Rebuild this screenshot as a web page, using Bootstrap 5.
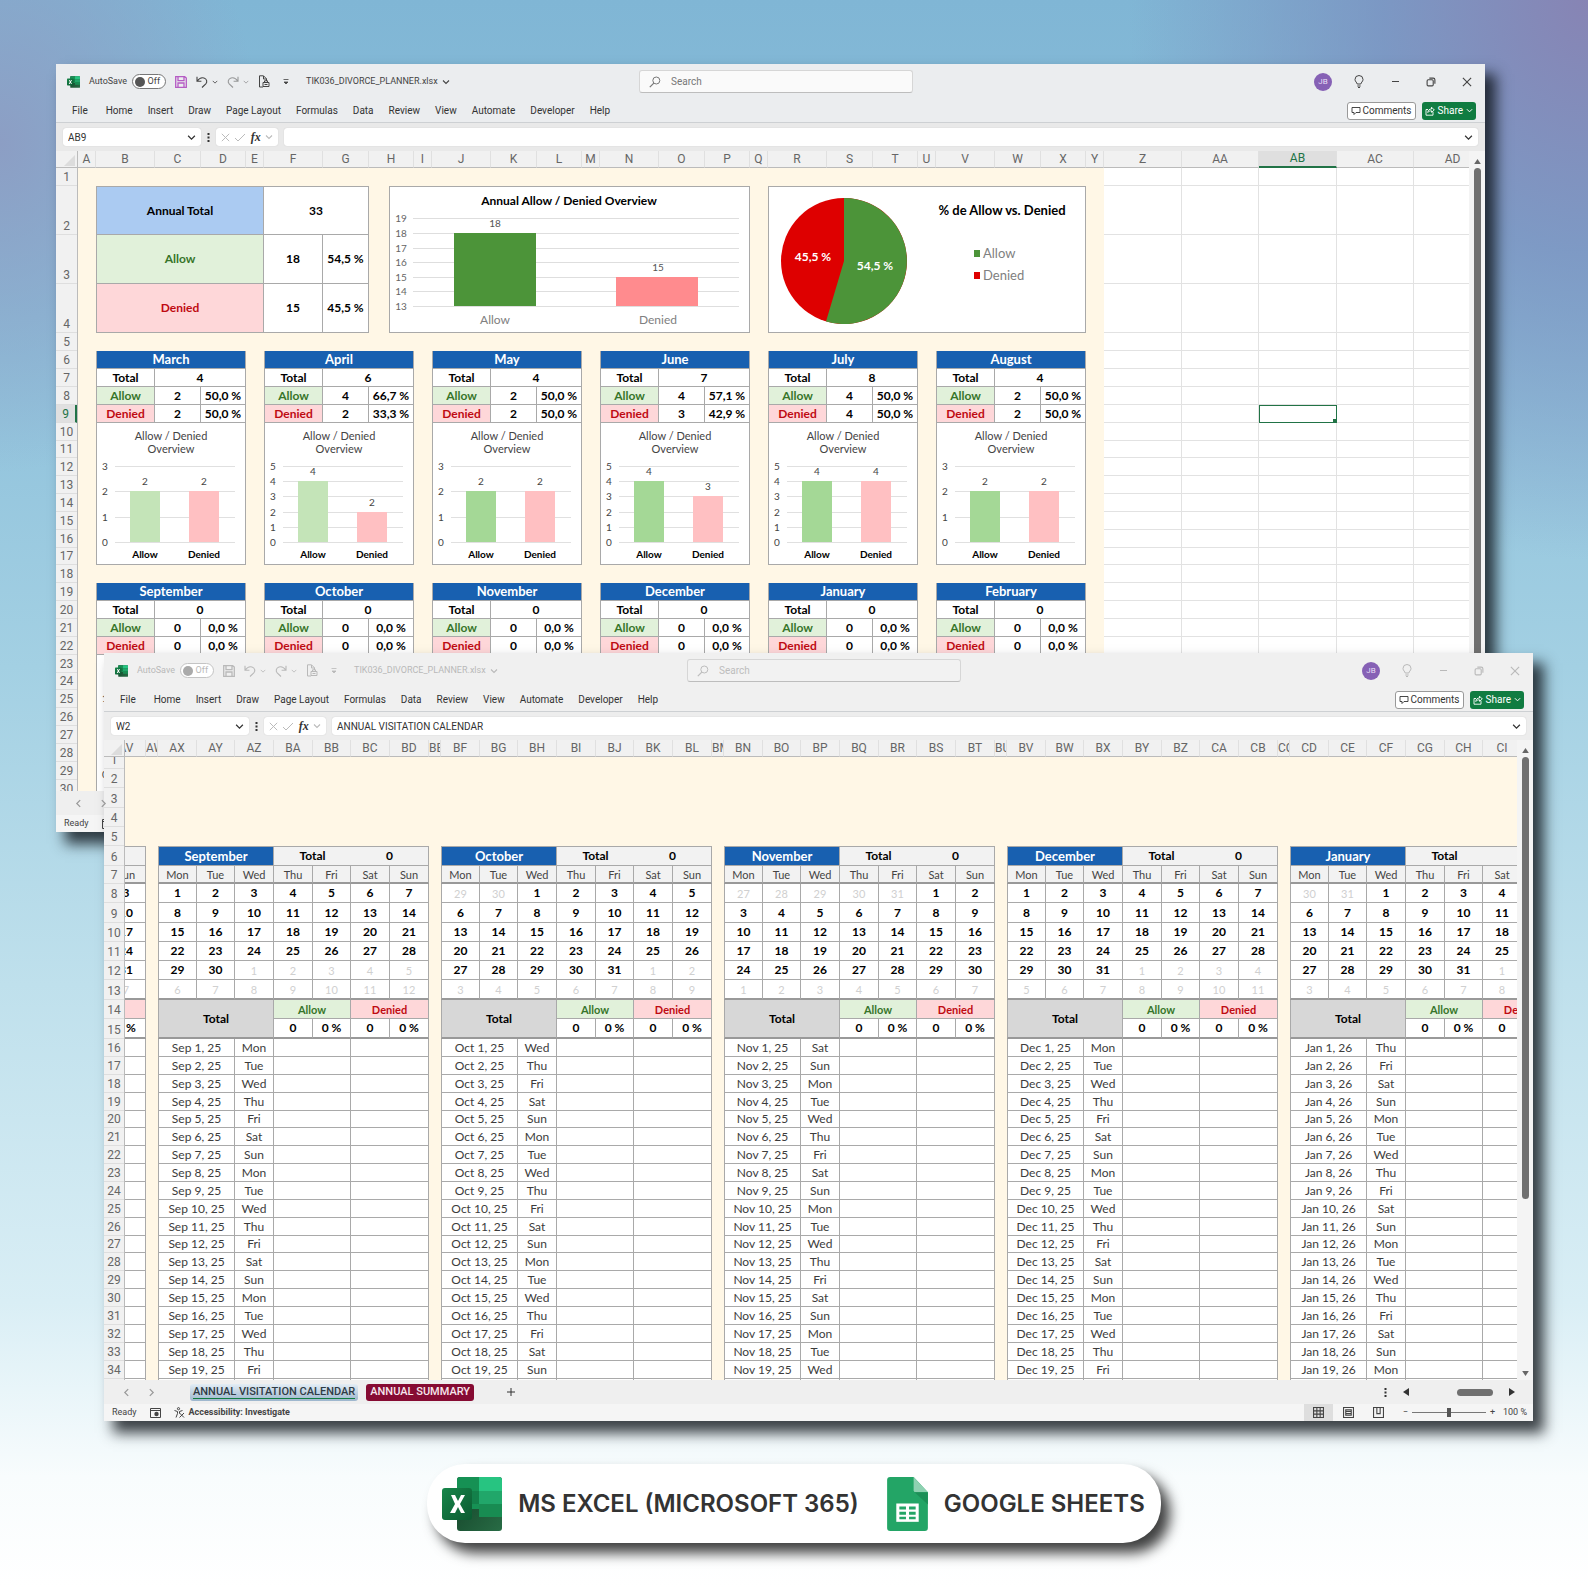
<!DOCTYPE html>
<html lang="en">
<head>
<meta charset="utf-8">
<meta name="viewport" content="width=device-width, initial-scale=1">
<title>Divorce Planner – Excel and Google Sheets</title>
<link rel="stylesheet" href="https://cdn.jsdelivr.net/npm/bootstrap@5.3.0/dist/css/bootstrap.min.css">
<style>
:root{--ui:Roboto,"Open Sans",sans-serif;--doc:Lato,"Open Sans",sans-serif;--line:#a9a9a9;--cream:#fff7e6;--blue:#1860b0}
body{font-family:var(--ui);font-size:10px;color:#333;min-height:100vh;
background:
radial-gradient(ellipse 460px 560px at 100% 0,#8784b4 0,rgba(122,142,190,.75) 45%,rgba(130,160,200,0) 100%),
radial-gradient(ellipse 260px 330px at 0 9%,#8c9ec4 0,rgba(141,160,196,0) 100%),
linear-gradient(180deg,#80b6d5 0,#8cbfda 20%,#a3d0e3 42%,#bfe0ec 62%,#d9eef5 82%,#f8fcfd 93%,#fff 100%)}
.desk{display:grid;padding:64px 55px 0 56px}
.win{grid-area:1/1;align-self:start;box-shadow:10px 11px 13px 1px rgba(10,15,20,.78);background:#ebedef;min-width:0}
.win-a{margin-right:48px}
.win-b{margin:589px 0 0 48px;background:#f0f0f0}
.win button{border:0;background:none;padding:0;color:inherit;line-height:1}
.win svg{display:block;flex:none}
.titlebar{display:grid;grid-template-columns:1fr 274px 1fr;height:35px;padding-left:11px;align-items:center;color:#444;font-size:9px}
.win-b .titlebar{color:#b9b9b9}
.tl{gap:9px}
.autolabel{gap:5px;line-height:15px}
.switchbox{border:1px solid #777;border-radius:8px;width:34px;height:15px;padding:0 5px 0 2px;background:#fff}
.win-b .switchbox{border-color:#c4c4c4}
.switchbox input{appearance:none;width:10px;height:10px;border-radius:50%;background:#555;margin:0}
.win-b .switchbox input{background:#aaa}
.fname{margin-left:8px}
.searchbox{height:23px;background:#fafafa;border:1px solid #d6d6d6;border-bottom-color:#bdbdbd;border-radius:3px;padding:0 9px;gap:10px;color:#777}
.win-b .searchbox{background:#f2f2f2;color:#bdbdbd}
.searchbox input,.fbar input{border:0;background:none;outline:0;font-size:10px;color:#333;min-width:0;padding:0}
.searchbox input::placeholder{color:inherit;opacity:1}
.searchbox input{color:inherit}
.slot{width:36px;display:flex;justify-content:center}
.avatar{width:18px;height:18px;border-radius:50%;background:#8661b5;color:#e9dff5;font-size:8px}
.menubar{height:24px;border-bottom:1px solid #cdd0d3;padding:0 9px 0 16px;gap:15px}
.menubar a{color:#333;text-decoration:none;line-height:25px}
.menubar a:first-child{margin-right:3px}
.review-tools{gap:6px}
.win .comments{height:18px;border:1px solid #999;border-radius:3px;background:#fff;padding:0 3px;gap:2px}
.win .share{height:18px;border-radius:3px;background:#107c41;color:#fff;padding:0 3px;gap:3px}
.fbar{padding:5px 7px;height:28px;gap:6px;background:#e9e9e9}
.win-b .fbar{background:#ededed}
.fld{height:18px;background:#fff;border-radius:3px;padding:0 5px;box-shadow:0 0 1px #bbb}
.namebox{width:138px}
.fxbox{width:62px;justify-content:space-between}
.fxbox span{color:#bbb}
.fxbox i{font:italic bold 12px "Liberation Serif",serif}
.sheet{display:flex;overflow:hidden;background:#f1f1f1;height:640px}
.rowheads{flex:none;background:#f1f1f1;color:#666;font-size:12px;border-right:1px solid #bbb;text-align:center}
.win-a .rowheads{width:22px}.win-b .rowheads{width:21px}
.rowheads div{display:flex;align-items:flex-end;justify-content:center;line-height:15px;border-bottom:1px solid #dedede;overflow:hidden}
.rowheads .corner{height:17px;border-color:#bbb}
.rowheads .sel{background:#e0e0e0;color:#217346;border-right:2px solid #217346}
.pane{flex:1;min-width:0;overflow:hidden}
.win-b .pane table{margin-left:-18px}
.grid-t{table-layout:fixed;border-collapse:separate;border-spacing:0;font-family:var(--doc);font-size:12px;text-align:center;color:#000}
.grid-t td,.grid-t th{padding:0;line-height:1;overflow:hidden;white-space:nowrap;vertical-align:middle}
.grid-t thead th{height:17px;font:12px var(--ui);line-height:16px;color:#666;background:#f1f1f1;border-bottom:1px solid #bbb;border-right:1px solid #e0e0e0}
.grid-t thead th.sel{background:#dfdfdf;color:#217346;border-bottom:2px solid #217346;line-height:15px}
.cream{background:var(--cream)}
.plain{background:#fff;border-right:1px solid #e2e2e2;border-bottom:1px solid #e2e2e2}
.picked{background:linear-gradient(#217346,#217346) right bottom/3px 3px no-repeat #fff;border:1px solid #217346}
.c{background:#fff;border-right:1px solid var(--line);border-bottom:1px solid var(--line)}
.l{border-left:1px solid var(--line)}
.t{border-top:1px solid var(--line)}
.b{font-weight:700}
.mo{background:var(--blue);color:#fff;font-weight:700;font-size:13px}
.al{background:#e1f1da;color:#37752a;font-weight:700}
.de{background:#fed7d9;color:#bf0a12;font-weight:700}
.an{background:#abcbf2;font-weight:700}
.hd{background:#f2f2f2}
.nb{border-right:0}
.wk{font-size:11px;color:#444}
.dim{color:#d0d0d0;font-weight:400}
.sm{font-size:11px}
.tot{background:#d7d7d7;font-weight:700}
.thick{border-bottom:2px solid #999}
.dt{color:#3c3c3c}
.grid-t .boxed{padding-left:20px}
.frame{border:1px solid var(--line);background:#fff}
.grid-t svg text{font-family:var(--doc)}
.vbar{width:16px;flex:none;background:#f4f4f4;color:#666}
.vbar span{width:7px;border-radius:4px;background:#707070}
.win-a .vbar span{height:540px}.win-b .vbar span{height:442px}
.tabs{height:24px;background:#efefef;padding:0 18px 0 18px}
.win .tabs .nav-arrow{color:#999}
.tabs a{font-size:11px;line-height:16px;height:17px;text-decoration:none;padding:0 3px;border-radius:3px;font-weight:500}
.tabs .tab-on{background:linear-gradient(#e3edf5,#9db6cd);color:#2f3b45;margin-left:34px}
.tab-on span{border-bottom:1px solid #107c41;display:block;height:15px}
.tabs .tab-red{background:#860b33;color:#f6e6ec;margin-left:8px;padding:0 4px}
.status{height:17px;background:#f5f5f5;padding:0 6px 0 8px;font-size:9px;color:#444}
.st-l{gap:13px}
.st-r{gap:19px}
.st-on{background:#dedede;padding:3px 9px;margin-right:-9px}
.hthumb{width:36px;height:7px;border-radius:4px;background:#707070}
.status input[type=range]{appearance:none;width:74px;height:10px;margin:0;background:linear-gradient(#777,#777) center/100% 1px no-repeat}
.status input[type=range]::-webkit-slider-thumb{appearance:none;width:4px;height:9px;background:#555}
.pill{height:79px;border-radius:38px;background:#fff;box-shadow:9px 10px 13px rgba(0,0,0,.75);padding:0 16px 0 15px;margin:43px 0 45px;font:600 24px Inter,"Open Sans",sans-serif;color:#333}
.pill-gap{margin-left:28px}
</style>
</head>
<body>
<svg width="0" height="0" class="position-absolute" aria-hidden="true">
<defs>
<linearGradient id="gx" x1="0" y1="0" x2="1" y2="1"><stop offset="0" stop-color="#17864a"/><stop offset="1" stop-color="#0b5a31"/></linearGradient>
<linearGradient id="gd" x1="0" y1="0" x2="1" y2="1"><stop offset="0" stop-color="#123f26"/><stop offset="1" stop-color="#286c45"/></linearGradient>
<symbol id="xl" viewBox="0 0 60 54">
<rect x="15" width="45" height="54" rx="3" fill="url(#gd)"/><path d="M15 27V3a3 3 0 0 1 3-3h19v32H15z" fill="#169154"/><path d="M37 0h20a3 3 0 0 1 3 3v11H37z" fill="#27c481"/><path d="M37 14h23v13H37z" fill="#21a76a"/><path d="M37 27h23v13H37z" fill="#188c52"/><path d="M15 14h22v13H15z" fill="#13804a"/>
<rect y="11" width="30" height="32" rx="3" fill="url(#gx)"/><path d="M9 18h4l3 6 3-6h4l-5 9 5 9h-4l-3-6-3 6H8l5-9z" fill="#fff"/></symbol>
<symbol id="gs" viewBox="0 0 40 53"><path d="M3 0h23l14 15v35a3 3 0 0 1-3 3H3a3 3 0 0 1-3-3V3a3 3 0 0 1 3-3z" fill="#23a566"/><path d="M26 0l14 15H28a2 2 0 0 1-2-2z" fill="#8ed1b1"/><path d="M27 15h13v12z" fill="#1c8f57"/><path d="M9 26h22v18H9z" fill="#fff"/><path d="M12 29h6.500v3H12zM21.500 29H28v3h-6.500zM12 34h6.500v3H12zM21.500 34H28v3h-6.500zM12 39h6.500v2.500H12zM21.500 39H28v2.500h-6.500z" fill="#23a566"/></symbol>
<symbol id="save" viewBox="0 0 12 12"><path d="M.7.7h9L11.300 2v9.300H.7zM3 .7v4h6v-4M3 11V7h6v4" fill="none" stroke="currentColor" stroke-width="1.300"/></symbol>
<symbol id="undo" viewBox="0 0 12 12"><path d="M1 .8v4.400h4.400M1.300 5C3 2.500 5.500 1.200 8 2c3 1 3.500 4 1.800 5.800L6 11.500" fill="none" stroke="currentColor" stroke-width="1.100"/></symbol>
<symbol id="chev" viewBox="0 0 8 8"><path d="M1 2.500l3 3 3-3" fill="none" stroke="currentColor" stroke-width="1.100"/></symbol>
<symbol id="doc" viewBox="0 0 12 13"><path d="M5 12H1.500V.8h4l3 3V6M5.500 1v3h3" fill="none" stroke="currentColor"/><path d="M5 7.500h6v4H5zM6.500 7.500V5.800h3v1.700M6.500 9.500h3" fill="none" stroke="currentColor"/></symbol>
<symbol id="cust" viewBox="0 0 6 8"><path d="M.5 1.500h5M1 4l2 2 2-2z" fill="currentColor" stroke="currentColor" stroke-width=".8"/></symbol>
<symbol id="mag" viewBox="0 0 12 12"><circle cx="7.300" cy="4.500" r="3.500" fill="none" stroke="currentColor"/><path d="M4.800 7.200L.8 11.200" stroke="currentColor" stroke-width="1.200"/></symbol>
<symbol id="bulb" viewBox="0 0 10 13"><path d="M3.200 9C3 7.500 1 6.500 1 4.500a4 4 0 0 1 8 0C9 6.500 7 7.500 6.800 9zM3.300 11h3.400M4 12.500h2" fill="none" stroke="currentColor"/></symbol>
<symbol id="rest" viewBox="0 0 9 9"><rect x="1" y="2.500" width="5.500" height="5.500" rx="1" fill="none" stroke="currentColor"/><path d="M3 1h3.500A1.500 1.500 0 0 1 8 2.500V6" fill="none" stroke="currentColor"/></symbol>
<symbol id="cross" viewBox="0 0 9 9"><path d="M.8.800l7.400 7.400M8.200.8L.8 8.200" stroke="currentColor"/></symbol>
<symbol id="chat" viewBox="0 0 10 10"><path d="M1 1.500h8v5H5l-2 2v-2H1z" fill="none" stroke="currentColor" stroke-width=".9"/></symbol>
<symbol id="shr" viewBox="0 0 10 10"><path d="M3 3.500H1v5.700h7V6M2.800 6.500C3 4 4.500 3 6.500 3V1.200L9.300 4 6.500 6.300V4.800C5 4.800 3.800 5.200 2.800 6.500z" fill="none" stroke="currentColor" stroke-width=".9"/></symbol>
<symbol id="check" viewBox="0 0 12 9"><path d="M1 5l3 3L11 1" fill="none" stroke="currentColor"/></symbol>
<symbol id="up" viewBox="0 0 8 6"><path d="M4 0l4 6H0z" fill="currentColor"/></symbol>
<symbol id="down" viewBox="0 0 8 6"><path d="M4 6L0 0h8z" fill="currentColor"/></symbol>
<symbol id="lt" viewBox="0 0 6 8"><path d="M0 4l6-4v8z" fill="currentColor"/></symbol>
<symbol id="rt" viewBox="0 0 6 8"><path d="M6 4L0 0v8z" fill="currentColor"/></symbol>
<symbol id="dots" viewBox="0 0 3 9"><path d="M.5 0h2v2h-2zM.5 3.500h2v2h-2zM.5 7h2v2h-2z" fill="currentColor"/></symbol>
<symbol id="rec" viewBox="0 0 11 10"><path d="M.5.5h10v9H.5zM.5 2.500h10" fill="none" stroke="currentColor"/><circle cx="6.500" cy="6" r="2.200" fill="currentColor"/></symbol>
<symbol id="acc" viewBox="0 0 11 11"><circle cx="4.500" cy="1.700" r="1.100" fill="none" stroke="currentColor"/><path d="M.5 3.500l3 1v2L2 10.500M8.500 3.500l-3 1v2M5.500 6l4.500 4.500M10 6l-4.500 4.500" fill="none" stroke="currentColor"/></symbol>
<symbol id="vg" viewBox="0 0 10 10"><path d="M.5.5h9v9h-9zM.5 3.500h9M.5 6.500h9M3.500.5v9M6.500.5v9" fill="none" stroke="currentColor"/></symbol>
<symbol id="vp" viewBox="0 0 10 10"><path d="M.5.5h9v9h-9zM2.500 2.500h5v5h-5zM3 4h4M3 6h4" fill="none" stroke="currentColor"/></symbol>
<symbol id="vb" viewBox="0 0 10 10"><path d="M.5.5h9v9h-9zM3.500.5V6H6.500V.5" fill="none" stroke="currentColor"/></symbol>
</defs></svg>

<main>
<div class="desk">
<section class="win win-a" id="summary" aria-label="Annual summary"></section>
<section class="win win-b" id="calendar" aria-label="Annual visitation calendar"></section>
</div>
<div class="d-flex justify-content-center">
<div class="pill d-flex align-items-center">
<svg width="60" height="54"><use href="#xl"/></svg><span class="ms-3">MS EXCEL (MICROSOFT 365)</span>
<svg width="41" height="54" class="pill-gap"><use href="#gs"/></svg><span class="ms-3">GOOGLE SHEETS</span>
</div>
</div>
</main>

<script src="https://cdn.jsdelivr.net/npm/bootstrap@5.3.0/dist/js/bootstrap.bundle.min.js"></script>
<script>
const ic=(id,w,h,extra='')=>`<svg width="${w}" height="${h}" ${extra}><use href="#${id}"/></svg>`;
const btn=(label,inner,cls='')=>`<button type="button" aria-label="${label}" class="${cls}">${inner}</button>`;

/* Application frame shared by both workbook windows */
function frame(o){
 const menus=['File','Home','Insert','Draw','Page Layout','Formulas','Data','Review','View','Automate','Developer','Help'];
 return `
<header>
<div class="titlebar">
 <div class="tl d-flex align-items-center">${ic('xl',13,12)}
  <label class="autolabel d-flex align-items-center">AutoSave
   <span class="switchbox d-flex align-items-center justify-content-between"><input type="checkbox" role="switch">Off</span></label>
  ${btn('Save',ic('save',12,12,o.active?'style="color:#b55bc4"':''))}
  <span class="d-flex align-items-center gap-1">${btn('Undo',ic('undo',12,12))}${ic('chev',6,6)}</span>
  <span class="d-flex align-items-center gap-1 ${o.active?'opacity-50':''}">${btn('Redo',ic('undo',12,12,'transform="scale(-1 1)"'))}${ic('chev',6,6)}</span>
  ${btn('Print preview',ic('doc',12,13))}${btn('Customize toolbar',ic('cust',6,8),'ms-1')}
  <span class="fname d-flex align-items-center gap-1">TIK036_DIVORCE_PLANNER.xlsx ${ic('chev',8,8)}</span>
 </div>
 <label class="searchbox d-flex align-items-center">${ic('mag',12,12)}<input type="search" placeholder="Search" aria-label="Search" class="flex-grow-1"></label>
 <div class="d-flex align-items-center justify-content-end">
  <span class="slot"><span class="avatar d-flex align-items-center justify-content-center">JB</span></span>
  ${btn('Tips',ic('bulb',12,13),'slot')}${btn('Minimize','<svg width="9" height="9"><path d="M1 4.500h7" stroke="currentColor"/></svg>','slot')}${btn('Restore',ic('rest',10,10),'slot')}${btn('Close',ic('cross',10,10),'slot')}
 </div>
</div>
<nav class="menubar d-flex align-items-center">${menus.map(m=>`<a href="#">${m}</a>`).join('')}
 <div class="review-tools d-flex ms-auto"><button type="button" class="comments d-flex align-items-center">${ic('chat',10,10)}Comments</button>
 <button type="button" class="share d-flex align-items-center">${ic('shr',10,10)}Share${ic('chev',7,7)}</button></div>
</nav>
<div class="fbar d-flex align-items-center">
 <label class="fld namebox d-flex align-items-center"><input value="${o.cell}" aria-label="Name box" class="flex-grow-1">${ic('chev',9,9)}</label>
 ${ic('dots',3,9)}
 <div class="fld fxbox d-flex align-items-center"><span>${ic('cross',9,9)}</span><span>${ic('check',12,9)}</span><i>fx</i><span>${ic('chev',8,8)}</span></div>
 <label class="fld flex-grow-1 d-flex align-items-center"><input value="${o.formula}" aria-label="Formula bar" class="flex-grow-1">${ic('chev',9,9)}</label>
</div>
</header>
<div class="sheet"><div class="rowheads">${o.rowHeads}</div><div class="pane">${o.table}</div>
 <div class="vbar d-flex flex-column align-items-center pt-2 pb-1">${ic('up',7,5)}<span class="mt-1"></span><div class="mt-auto">${ic('down',7,5)}</div></div></div>
<div class="tabs d-flex align-items-center">
 ${btn('Previous sheet',ic('chev',9,9,'transform="rotate(90)"'),'nav-arrow')}${btn('Next sheet',ic('chev',9,9,'transform="rotate(-90)"'),'nav-arrow ms-3')}
 <a href="#" class="tab-on"><span>ANNUAL VISITATION CALENDAR</span></a><a href="#" class="tab-red">ANNUAL SUMMARY</a>
 ${btn('New sheet','<svg width="10" height="10"><path d="M5 1v8M1 5h8" stroke="currentColor"/></svg>','ms-4 ps-2')}
 <div class="d-flex align-items-center ms-auto">${ic('dots',3,9,'class="me-3"')}${ic('lt',6,8)}<span class="hthumb ms-5"></span>${ic('rt',6,8,'class="ms-3"')}</div>
</div>
<footer class="status d-flex align-items-center justify-content-between">
 <div class="st-l d-flex align-items-center"><span>Ready</span>${ic('rec',11,10)}<span class="d-flex align-items-center gap-1">${ic('acc',11,11)}<b>Accessibility: Investigate</b></span></div>
 <div class="st-r d-flex align-items-center"><span class="st-on">${ic('vg',11,11)}</span>${ic('vp',11,11)}${ic('vb',11,11)}
 <span class="d-flex align-items-center gap-1"><span>−</span><input type="range" aria-label="Zoom" value="50"><span>+</span><span class="ms-1">100 %</span></span></div>
</footer>`;
}
function colName(n){let s='';n++;while(n){n--;s=String.fromCharCode(65+n%26)+s;n=Math.floor(n/26)}return s}
function makeTable(cols,first,rows,cells,base,selCol){
 const w=cols.reduce((a,b)=>a+b,0),taken={};
 let h=`<table class="grid-t" style="width:${w}px"><colgroup>${cols.map(c=>`<col style="width:${c}px">`).join('')}</colgroup><thead><tr>`;
 cols.forEach((c,i)=>h+=`<th class="${i===selCol?'sel':''}">${colName(first+i)}</th>`);
 h+='</tr></thead><tbody>';
 rows.forEach((rh,r)=>{
  h+=`<tr style="height:${rh}px">`;
  cols.forEach((_,c)=>{
   if(taken[r+','+c])return;
   const x=cells[r+','+c];
   if(!x){h+=`<td class="${base(r,c)}"></td>`;return}
   const rs=x.rs||1,cs=x.cs||1;
   for(let a=0;a<rs;a++)for(let b=0;b<cs;b++)taken[(r+a)+','+(c+b)]=1;
   h+=`<td class="${x.k}" ${rs>1?`rowspan="${rs}"`:''} ${cs>1?`colspan="${cs}"`:''}>${x.v}</td>`;
  });
  h+='</tr>';
 });
 return h+'</tbody></table>';
}
const heads=(rows,sel)=>'<div class="corner"><svg width="20" height="16"><path d="M18 4v11H7z" fill="#dcdcdc"/></svg></div>'+rows.map((r,i)=>`<div class="${i===sel?'sel':''}" style="height:${r}px">${i+1}</div>`).join('');
const T=(x,y,s,sz,extra='')=>`<text x="${x}" y="${y}" font-size="${sz}" text-anchor="middle" ${extra}>${s}</text>`;

/* Column chart under each month */
function monthChart(a,d,max,col){
 let s='<svg width="148" height="140" viewBox="0 0 148 140">';
 s+=T(74,16,'Allow / Denied',11,'fill="#444"')+T(74,29,'Overview',11,'fill="#444"');
 const y=v=>118-Math.round(v*76/max);
 for(let i=0;i<=max;i++)s+=`<path d="M18 ${y(i)+.5}H138" stroke="#e0e0e0"/>`+T(8,y(i)+4,i,10,'fill="#444"');
 s+=`<path fill="${col}" d="M33 ${y(a)}h30V118H33z"/><path fill="#ffc0c2" d="M92 ${y(d)}h30V118H92z"/>`;
 s+=T(48,y(a)-6,a,10,'fill="#444"')+T(107,y(d)-6,d,10,'fill="#444"');
 return s+T(48,134,'Allow',10,'font-weight="700"')+T(107,134,'Denied',10,'font-weight="700"')+'</svg>';
}
function annualBars(){
 let s='<svg width="100%" height="145" viewBox="0 0 359 145">'+T(179,18,'Annual Allow / Denied Overview',12,'font-weight="700"');
 const y=v=>Math.round(119-(v-13)*14.6);
 for(let v=13;v<=19;v++)s+=`<path d="M23 ${y(v)+.5}H349" stroke="#dedede"/>`+T(11,y(v)+4,v,10,'fill="#666"');
 s+=`<path fill="#4c9439" d="M64 ${y(18)}h82V119H64z"/><path fill="#ff8b8e" d="M226 ${y(15)}h82V119H226z"/>`;
 return s+T(105,40,18,10,'fill="#555"')+T(268,84,15,10,'fill="#555"')+T(105,137,'Allow',12,'fill="#808080"')+T(268,137,'Denied',12,'fill="#808080"')+'</svg>';
}
function annualPie(){
 return '<svg width="100%" height="145" viewBox="0 0 316 145"><circle cx="75" cy="74" r="63" fill="#de0000"/><path d="M75 74V11A63 63 0 1 1 57 134.400z" fill="#4c9439"/>'
 +T(44,74,'45,5 %',12,'fill="#fff" font-weight="700"')+T(106,83,'54,5 %',12,'fill="#fff" font-weight="700"')
 +T(233,28,'% de Allow vs. Denied',13,'font-weight="700"')
 +'<path d="M205 63h6v7h-6z" fill="#4c9439"/><path d="M205 85h6v7h-6z" fill="#de0000"/><text x="214" y="71" font-size="13" fill="#808080">Allow</text><text x="214" y="93" font-size="13" fill="#808080">Denied</text></svg>';
}

/* Annual summary sheet */
(function(){
 const cols=[18];for(let i=0;i<6;i++)cols.push(59,46,45,18);
 cols.push(78,77,78,77,78);
 const rows=[18,49,49,49,18];
 for(let r=6;r<=31;r++)rows.push([11,17,24].includes(r)?17:18);
 const C={},put=(r,c,k,v,cs,rs)=>C[(r-1)+','+c]={k,v,cs,rs};
 put(2,1,'c l t an','Annual Total',4);put(2,5,'c t b','33',2);
 put(3,1,'c l al','Allow',4);put(3,5,'c b','18');put(3,6,'c b','54,5 %');
 put(4,1,'c l de','Denied',4);put(4,5,'c b','15');put(4,6,'c b','45,5 %');
 put(2,7,'cream boxed',`<div class="frame">${annualBars()}</div>`,9,3);
 put(2,17,'cream',`<div class="frame">${annualPie()}</div>`,7,3);
 const m=[['March',2,2,'50,0 %','50,0 %',3],['April',4,2,'66,7 %','33,3 %',5],['May',2,2,'50,0 %','50,0 %',3],['June',4,3,'57,1 %','42,9 %',5],['July',4,4,'50,0 %','50,0 %',5],['August',2,2,'50,0 %','50,0 %',3]]
 .concat(['September','October','November','December','January','February'].map(n=>[n,0,0,'0,0 %','0,0 %',1]));
 m.forEach((x,i)=>{
  const r=i<6?6:19,c=1+(i%6)*4;
  put(r,c,'c l mo',x[0],3);
  put(r+1,c,'c l b','Total');put(r+1,c+1,'c b',x[1]+x[2],2);
  put(r+2,c,'c l al','Allow');put(r+2,c+1,'c b',x[1]);put(r+2,c+2,'c b',x[3]);
  put(r+3,c,'c l de','Denied');put(r+3,c+1,'c b',x[2]);put(r+3,c+2,'c b',x[4]);
  put(r+4,c,'c l',monthChart(x[1],x[2],x[5],i<2?'#c4e4b8':'#a4d896'),3,8);
 });
 put(9,27,'picked','');
 document.getElementById('summary').innerHTML=frame({active:true,cell:'AB9',formula:'',rowHeads:heads(rows,8),
  table:makeTable(cols,0,rows,C,(r,c)=>c<25?'cream':'plain',27)});
})();

/* Visitation calendar sheet, scrolled to columns AV onwards */
(function(){
 const week=[39,38,39,39,38,39,39],cols=[39,12];
 for(let i=0;i<5;i++)cols.push(...week,12);
 const rows=[12,19,20,19,19,20,18,19,20,19,19,19,20,19,20];
 for(let r=16;r<=35;r++)rows.push([20,27].includes(r)?17:18);
 const C={},put=(r,c,k,v,cs,rs)=>C[(r-1)+','+c]={k,v,cs,rs};
 const D=['Mon','Tue','Wed','Thu','Fri','Sat','Sun'],
 names=['January','February','March','April','May','June','July','August','September','October','November','December'];
 put(6,0,'c t hd','');put(7,0,'c hd wk thick','Sun');
 [3,10,17,24,31,7].forEach((d,i)=>put(8+i,0,'c '+(i===5?'dim sm thick':'b'),d));
 put(14,0,'c de','');put(15,0,'c b thick','0 %');
 for(let r=16;r<=35;r++)put(r,0,'c','');
 for(let i=0;i<5;i++){
  const y=i<4?2025:2026,mo=(8+i)%12,c=2+i*8,start=(new Date(y,mo,1).getDay()+6)%7;
  /* the planner's month grids are all laid out for 2025 */
  const lead=(new Date(2025,mo,1).getDay()+6)%7;
  put(6,c,'c l t mo',names[mo],3);put(6,c+3,'c t b hd nb','Total',2);put(6,c+5,'c t b hd','0',2);
  D.forEach((d,k)=>put(7,c+k,'c hd wk thick'+(k?'':' l'),d));
  for(let w=0;w<6;w++)for(let k=0;k<7;k++){
   const dt=new Date(2025,mo,1-lead+w*7+k);
   put(8+w,c+k,'c '+(dt.getMonth()===mo?'b':'dim sm')+(k?'':' l')+(w===5?' thick':''),dt.getDate());
  }
  put(14,c,'c l tot thick','Total',3,2);
  put(14,c+3,'c al sm','Allow',2);put(14,c+5,'c de sm','Denied',2);
  ['0','0 %','0','0 %'].forEach((v,k)=>put(15,c+3+k,'c b thick',v));
  for(let d=1;d<=20;d++){
   const r=15+d;
   put(r,c,'c l dt',`${names[mo].slice(0,3)} ${d}, ${y%100}`,2);
   put(r,c+2,'c dt',D[(start+d-1)%7]);put(r,c+3,'c','',2);put(r,c+5,'c','',2);
  }
 }
 document.getElementById('calendar').innerHTML=frame({cell:'W2',formula:'ANNUAL VISITATION CALENDAR',rowHeads:heads(rows),
  table:makeTable(cols,47,rows,C,()=>'cream',-1)});
})();
</script>
</body>
</html>
